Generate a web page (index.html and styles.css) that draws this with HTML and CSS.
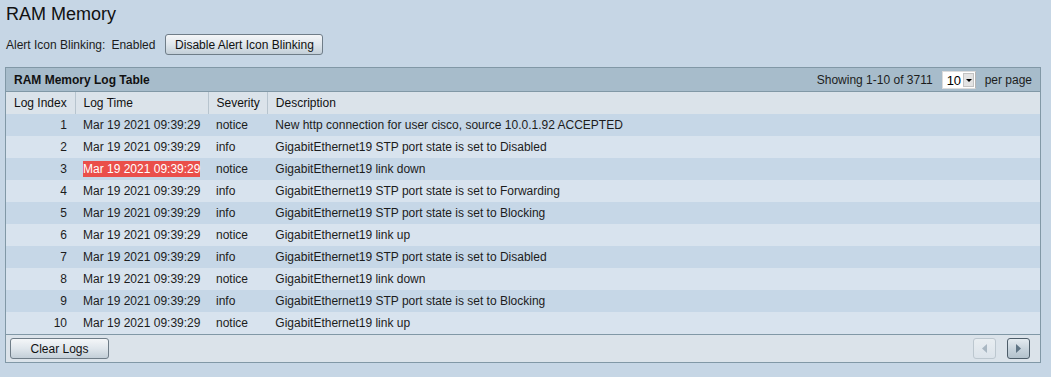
FILE: index.html
```html
<!DOCTYPE html>
<html lang="en">
<head>
    <meta charset="UTF-8">
    <title>RAM Memory</title>
    <link rel="stylesheet" href="styles.css">
</head>
<body>
    <div class="page">
        <h1 class="title">RAM Memory</h1>

        <div class="blink-row">
            <span class="blink-label">Alert Icon Blinking:</span>
            <span class="blink-value">Enabled</span>
            <button class="btn btn-wide">Disable Alert Icon Blinking</button>
        </div>

        <div class="log-box">
            <div class="log-head">
                <span class="log-title">RAM Memory Log Table</span>
                <div class="paging">
                    <span>Showing 1-10 of 3711</span>
                    <span class="fake-select">10<span class="sel-arrow"></span></span>
                    <span>per page</span>
                </div>
            </div>

            <table class="log-table">
                <thead>
                    <tr>
                        <th class="col-index">Log Index</th>
                        <th class="col-time">Log Time</th>
                        <th class="col-sev">Severity</th>
                        <th>Description</th>
                    </tr>
                </thead>
                <tbody>
                    <tr>
                        <td class="num">1</td>
                        <td>Mar 19 2021 09:39:29</td>
                        <td>notice</td>
                        <td>New http connection for user cisco, source 10.0.1.92 ACCEPTED</td>
                    </tr>
                    <tr>
                        <td class="num">2</td>
                        <td>Mar 19 2021 09:39:29</td>
                        <td>info</td>
                        <td>GigabitEthernet19 STP port state is set to Disabled</td>
                    </tr>
                    <tr>
                        <td class="num">3</td>
                        <td><span class="mark">Mar 19 2021 09:39:29</span></td>
                        <td>notice</td>
                        <td>GigabitEthernet19 link down</td>
                    </tr>
                    <tr>
                        <td class="num">4</td>
                        <td>Mar 19 2021 09:39:29</td>
                        <td>info</td>
                        <td>GigabitEthernet19 STP port state is set to Forwarding</td>
                    </tr>
                    <tr>
                        <td class="num">5</td>
                        <td>Mar 19 2021 09:39:29</td>
                        <td>info</td>
                        <td>GigabitEthernet19 STP port state is set to Blocking</td>
                    </tr>
                    <tr>
                        <td class="num">6</td>
                        <td>Mar 19 2021 09:39:29</td>
                        <td>notice</td>
                        <td>GigabitEthernet19 link up</td>
                    </tr>
                    <tr>
                        <td class="num">7</td>
                        <td>Mar 19 2021 09:39:29</td>
                        <td>info</td>
                        <td>GigabitEthernet19 STP port state is set to Disabled</td>
                    </tr>
                    <tr>
                        <td class="num">8</td>
                        <td>Mar 19 2021 09:39:29</td>
                        <td>notice</td>
                        <td>GigabitEthernet19 link down</td>
                    </tr>
                    <tr>
                        <td class="num">9</td>
                        <td>Mar 19 2021 09:39:29</td>
                        <td>info</td>
                        <td>GigabitEthernet19 STP port state is set to Blocking</td>
                    </tr>
                    <tr>
                        <td class="num">10</td>
                        <td>Mar 19 2021 09:39:29</td>
                        <td>notice</td>
                        <td>GigabitEthernet19 link up</td>
                    </tr>
                </tbody>
            </table>

            <div class="log-foot">
                <button class="btn btn-clear">Clear Logs</button>
                <div class="pager">
                    <button class="pg-btn disabled">
                        <svg width="6" height="9" viewBox="0 0 6 9"><path d="M5 0 L0 4.5 L5 9 Z" fill="#a9b7c2"/></svg>
                    </button>
                    <button class="pg-btn">
                        <svg width="6" height="9" viewBox="0 0 6 9"><path d="M0 0 L5 4.5 L0 9 Z" fill="#5f7484"/></svg>
                    </button>
                </div>
            </div>
        </div>
    </div>
</body>
</html>
```

FILE: styles.css
```css
* {
    box-sizing: border-box;
}

body {
    margin: 0;
    background: #c6d6e5;
    font-family: "Liberation Sans", Arial, sans-serif;
    font-size: 12px;
    color: #1c1c1c;
}

.page {
    width: 1046px;
    padding: 3px 0 0 5px;
}

.title {
    margin: 0 0 0 1px;
    font-size: 18px;
    font-weight: normal;
    line-height: 22px;
    color: #111;
}

.blink-row {
    display: flex;
    align-items: center;
    margin: 9px 0 0 1px;
    height: 21px;
}

.blink-value {
    margin-left: 6px;
}

.btn {
    height: 21px;
    border: 1px solid #6f7d88;
    border-radius: 3px;
    background: linear-gradient(#f4f6f8, #dfe6ec 50%, #c3cfd8);
    font-family: "Liberation Sans", Arial, sans-serif;
    font-size: 12px;
    color: #111;
    padding: 0 9px;
    white-space: nowrap;
    cursor: pointer;
}

.btn-wide {
    margin-left: 10px;
    width: 158px;
    padding: 0;
}

.log-box {
    margin-top: 12px;
    width: 1036px;
    border: 1px solid #8198a6;
    background: #c6d7e7;
}

.log-head {
    display: flex;
    justify-content: space-between;
    align-items: center;
    height: 24px;
    padding: 0 8px;
    background: #a7bccb;
    border-bottom: 1px solid #8198a6;
}

.log-title {
    font-weight: bold;
    color: #111;
}

.paging {
    display: flex;
    align-items: center;
    gap: 9px;
}

.fake-select {
    position: relative;
    width: 34px;
    height: 18px;
    background: #fff;
    border: 1px solid #dcdcdc;
    border-right-color: #b5b5b5;
    padding: 1px 0 0 4px;
    font-size: 13px;
    line-height: 15px;
    color: #000;
}

.sel-arrow {
    position: absolute;
    right: 1px;
    top: 1px;
    width: 11px;
    height: 14px;
    background: #e3e3e3;
    border: 1px solid #c3c3c3;
}

.sel-arrow::after {
    content: "";
    position: absolute;
    left: 2px;
    top: 5px;
    border-left: 3px solid transparent;
    border-right: 3px solid transparent;
    border-top: 3px solid #000;
}

.log-table {
    width: 100%;
    border-collapse: collapse;
}

.log-table th {
    height: 22px;
    background: #dbe3ea;
    font-weight: normal;
    text-align: left;
    padding: 0 7px 0 8px;
    border-left: 1px solid #fff;
    border-right: 1px solid #b7c4ce;
    color: #111;
}

.log-table th:first-child {
    border-left: none;
}

.log-table th:last-child {
    border-right: none;
}

.col-index {
    width: 69px;
}

.col-time {
    width: 133px;
}

.col-sev {
    width: 59px;
}

.log-table td {
    height: 22px;
    padding: 0 6px 0 8px;
    white-space: nowrap;
}

.log-table tbody tr:nth-child(odd) {
    background: #c6d7e7;
}

.log-table tbody tr:nth-child(even) {
    background: #d8e3ee;
}

.log-table td.num {
    text-align: right;
    padding-right: 8px;
}

.mark {
    background: #ea4f4a;
    color: #fff;
    padding: 1px 0;
}

.log-foot {
    display: flex;
    justify-content: space-between;
    align-items: center;
    height: 28px;
    padding: 0 10px 0 4px;
    background: #dbe3ea;
    border-top: 1px solid #8198a6;
}

.btn-clear {
    width: 99px;
}

.pager {
    display: flex;
    gap: 11px;
}

.pg-btn {
    width: 23px;
    height: 21px;
    border: 1px solid #4d5d69;
    border-radius: 3px;
    background: linear-gradient(#e4ebf0, #c6d2db 55%, #b3c2cc);
    padding: 0;
    display: flex;
    align-items: center;
    justify-content: center;
}

.pg-btn.disabled {
    border-color: #bcc7cf;
    background: linear-gradient(#e8edf1, #dbe3ea);
}
```
